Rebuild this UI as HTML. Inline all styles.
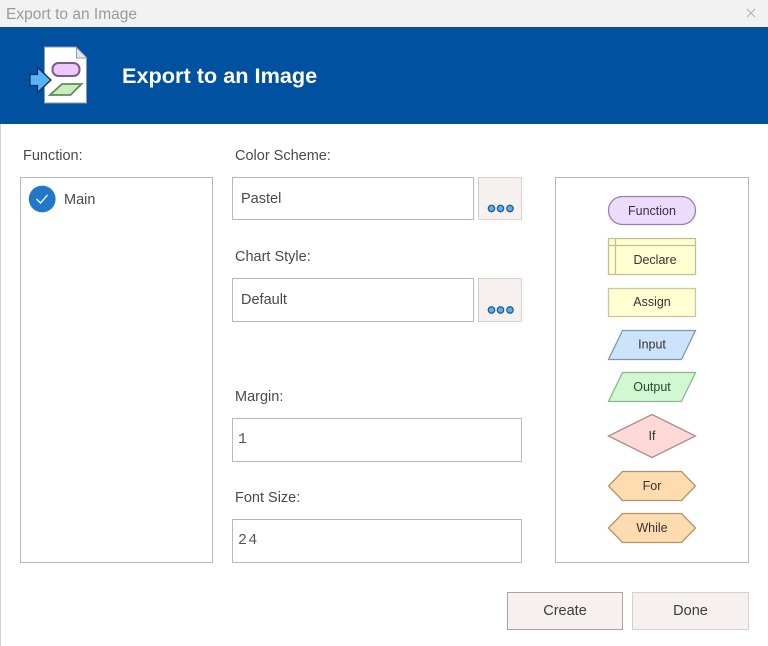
<!DOCTYPE html>
<html>
<head>
<meta charset="utf-8">
<style>
html,body{margin:0;padding:0;width:768px;height:646px;overflow:hidden;background:#fff;font-family:"Liberation Sans",sans-serif;color:#3c3c3c}
.a{position:absolute}
.box{position:absolute;box-sizing:border-box;background:#fff;border:1px solid #b8b8b8}
.lbl{position:absolute;font-size:14.5px;line-height:18px;color:#4a4a4a;white-space:nowrap}
.val{position:absolute;font-size:14.5px;line-height:18px;color:#4a4a4a;white-space:nowrap}
.mono{position:absolute;font-family:"Liberation Mono",monospace;font-size:15px;line-height:18px;color:#555;letter-spacing:1.2px}
.btn{position:absolute;box-sizing:border-box;background:#f6f1ee;border:1px solid #d6d2d0}
.big{font-size:14.5px;color:#3c3c3c;text-align:center;line-height:37px}
</style>
</head>
<body>
<div class="a" style="left:0;top:0;width:768px;height:27px;background:#f2f2f2"></div>
<div class="a" style="left:0;top:124px;width:1px;height:522px;background:#d4d4d4"></div>
<div class="a" style="left:6px;top:6px;font-size:15.5px;line-height:18px;color:#9a9a9a;white-space:nowrap">Export to an Image</div>
<svg class="a" style="left:745px;top:7px" width="12" height="12" viewBox="0 0 12 12"><path d="M2 2L10 10M10 2L2 10" stroke="#b4b4b4" stroke-width="1.2" fill="none"/></svg>
<div class="a" style="left:0;top:27px;width:768px;height:97px;background:#00519f"></div>
<svg class="a" style="left:20px;top:40px" width="80" height="70" viewBox="0 0 80 70">
<path d="M24.500 7H56L66.500 17.500V63H24.500Z" fill="#fff" stroke="#8d99a8" stroke-width="1"/>
<path d="M56.500 8V18H66" fill="#e8e8e8" stroke="#8d99a8" stroke-width="1"/>
<rect x="32.500" y="23" width="27" height="13" rx="6" fill="#ecc8fb" stroke="#7d5a88" stroke-width="2"/>
<path d="M42 44H61.500L50.500 55H30Z" fill="#c8eec0" stroke="#5c8c58" stroke-width="1.800"/>
<path d="M10 34.500H17.500V27.500L31 40L17.500 52.500V45.500H10Z" fill="#55b4fa" stroke="#0f2c55" stroke-width="1.300"/>
</svg>
<div class="a" style="left:122px;top:63px;font-size:21.700px;line-height:26px;font-weight:bold;color:#fff;white-space:nowrap">Export to an Image</div>

<div class="lbl" style="left:23px;top:147px">Function:</div>
<div class="box" style="left:20px;top:177px;width:193px;height:386px"></div>
<svg class="a" style="left:28px;top:185px" width="29" height="29" viewBox="0 0 29 29"><circle cx="14.200" cy="14" r="13.400" fill="#2178c9"/><path d="M8.500 14L12.500 18L19.500 10" stroke="#fff" stroke-width="1.300" fill="none"/></svg>
<div class="val" style="left:64px;top:191px">Main</div>

<div class="lbl" style="left:235px;top:147px">Color Scheme:</div>
<div class="box" style="left:232px;top:177px;width:242px;height:43px"></div>
<div class="val" style="left:241px;top:190px">Pastel</div>
<div class="btn" style="left:478px;top:177px;width:44px;height:43px"></div>
<svg class="a" style="left:478px;top:177px" width="44" height="43"><g fill="#52b4f4" stroke="#2a5a8c" stroke-width="1.300"><circle cx="13.500" cy="31.500" r="3.200"/><circle cx="22.500" cy="31.500" r="3.200"/><circle cx="32" cy="31.500" r="3.200"/></g></svg>

<div class="lbl" style="left:235px;top:248px">Chart Style:</div>
<div class="box" style="left:232px;top:278px;width:242px;height:44px"></div>
<div class="val" style="left:241px;top:291px">Default</div>
<div class="btn" style="left:478px;top:278px;width:44px;height:44px"></div>
<svg class="a" style="left:478px;top:278px" width="44" height="44"><g fill="#52b4f4" stroke="#2a5a8c" stroke-width="1.300"><circle cx="13.500" cy="32" r="3.200"/><circle cx="22.500" cy="32" r="3.200"/><circle cx="32" cy="32" r="3.200"/></g></svg>

<div class="lbl" style="left:235px;top:388px">Margin:</div>
<div class="box" style="left:232px;top:418px;width:290px;height:44px"></div>
<div class="mono" style="left:238px;top:431px">1</div>

<div class="lbl" style="left:235px;top:489px">Font Size:</div>
<div class="box" style="left:232px;top:519px;width:290px;height:44px"></div>
<div class="mono" style="left:238px;top:532px">24</div>

<div class="box" style="left:555px;top:177px;width:194px;height:386px"></div>
<svg class="a" style="left:590px;top:180px" width="125" height="370" viewBox="0 0 125 370" font-family="Liberation Sans, sans-serif" font-size="12.500" text-anchor="middle" fill="#333" stroke-width="1.300">
<rect x="18.500" y="16.500" width="87" height="28" rx="14" fill="#ecdcfb" stroke="#9c7fb0"/>
<text x="62" y="35" fill="#3a2a50">Function</text>
<rect x="18.500" y="58.500" width="87" height="36" fill="#ffffd2" stroke="#c0c098"/>
<path d="M18.500 65.500H105.500M25.500 58.500V94.500" stroke="#c0c098" fill="none"/>
<text x="65" y="84">Declare</text>
<rect x="18.500" y="108.500" width="87" height="28" fill="#ffffd2" stroke="#c8c8a0"/>
<text x="62" y="126">Assign</text>
<path d="M32.500 150.500H105.500L91.500 179.500H18.500Z" fill="#cce4fb" stroke="#7d97b0"/>
<text x="62" y="168.500">Input</text>
<path d="M32.500 192.500H105.500L91.500 221.500H18.500Z" fill="#d2f8d2" stroke="#8cb890"/>
<text x="62" y="211" fill="#264a30">Output</text>
<path d="M62 234.500L105.500 256L62 277.500L18.500 256Z" fill="#ffd8d8" stroke="#b08c90"/>
<text x="62" y="260">If</text>
<path d="M32.500 291.500H91.500L105.500 306L91.500 320.500H32.500L18.500 306Z" fill="#ffdcb0" stroke="#b09468"/>
<text x="62" y="310">For</text>
<path d="M32.500 333.500H91.500L105.500 348L91.500 362.500H32.500L18.500 348Z" fill="#ffdcb0" stroke="#b09468"/>
<text x="62" y="352">While</text>
</svg>

<div class="btn big" style="left:507px;top:592px;width:116px;height:38px;border:1.500px solid #aaa5a2">Create</div>
<div class="btn big" style="left:632px;top:592px;width:117px;height:38px">Done</div>
</body>
</html>
